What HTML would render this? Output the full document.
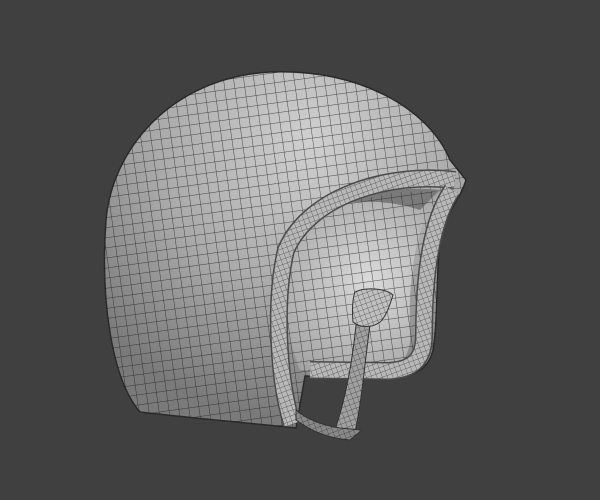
<!DOCTYPE html>
<html><head><style>html,body{margin:0;padding:0;background:#404040;width:600px;height:500px;overflow:hidden}</style></head>
<body>
<svg width="600" height="500" viewBox="0 0 600 500" xmlns="http://www.w3.org/2000/svg">
<defs>
<radialGradient id="sh" cx="310" cy="140" r="280" gradientUnits="userSpaceOnUse">
<stop offset="0" stop-color="#d0d0d0"/><stop offset="0.55" stop-color="#aaaaaa"/><stop offset="1" stop-color="#7a7a7a"/>
</radialGradient>
<radialGradient id="in" cx="370" cy="280" r="130" gradientUnits="userSpaceOnUse">
<stop offset="0" stop-color="#dadada"/><stop offset="1" stop-color="#9a9a9a"/>
</radialGradient>
<pattern id="g" width="10" height="10" patternUnits="userSpaceOnUse" patternTransform="rotate(-8)">
<path d="M0 0H10M0 0V10" stroke="#1e1e1e" stroke-width="1" fill="none" opacity="0.75"/>
</pattern>
<pattern id="g2" width="5" height="5" patternUnits="userSpaceOnUse" patternTransform="rotate(-20)">
<path d="M0 0H5M0 0V5" stroke="#222" stroke-width="0.7" fill="none" opacity="0.75"/>
</pattern>
</defs>
<path d="M140 412 C112 380,100 300,106 220 C112 150,170 78,270 72 C360 68,430 110,450 160 L466 180 C460 200,445 215,440 235 C436 280,438 320,433 350 C428 372,410 378,385 378 L305 376 L296 428 C260 424,190 418,140 412 Z" fill="url(#sh)" stroke="#2a2a2a" stroke-width="1.5"/>
<path d="M140 412 C112 380,100 300,106 220 C112 150,170 78,270 72 C360 68,430 110,450 160 L466 180 C460 200,445 215,440 235 C436 280,438 320,433 350 C428 372,410 378,385 378 L305 376 L296 428 C260 424,190 418,140 412 Z" fill="url(#g)"/>
<path d="M288 250 C310 205,380 188,440 192 C415 225,408 280,410 330 C412 356,400 368,385 370 L300 370 C284 330,280 285,288 250 Z" fill="url(#in)"/>
<path d="M330 205 C360 192,400 186,440 190 C430 200,425 205,420 210 C390 200,360 200,330 205 Z" fill="#7a7a7a"/>
<path d="M288 250 C310 205,380 188,440 192 C415 225,408 280,410 330 C412 356,400 368,385 370 L300 370 C284 330,280 285,288 250 Z" fill="url(#g)"/>
<path d="M455 180 C390 172,310 195,286 250 C274 300,278 380,292 424" stroke="#4a4a4a" stroke-width="18" fill="none"/>
<path d="M455 180 C390 172,310 195,286 250 C274 300,278 380,292 424" stroke="#b8b8b8" stroke-width="15" fill="none"/>
<path d="M455 180 C390 172,310 195,286 250 C274 300,278 380,292 424" stroke="url(#g2)" stroke-width="15" fill="none"/>
<path d="M452 190 C432 220,424 270,424 335 C424 362,410 370,388 371 L310 370" stroke="#4a4a4a" stroke-width="18" fill="none"/>
<path d="M452 190 C432 220,424 270,424 335 C424 362,410 370,388 371 L310 370" stroke="#b8b8b8" stroke-width="15" fill="none"/>
<path d="M452 190 C432 220,424 270,424 335 C424 362,410 370,388 371 L310 370" stroke="url(#g2)" stroke-width="15" fill="none"/>
<path d="M356 325 C352 365,345 400,335 430 L355 432 C362 400,365 360,370 325 Z" fill="#a0a0a0" stroke="#333" stroke-width="1"/>
<path d="M356 325 C352 365,345 400,335 430 L355 432 C362 400,365 360,370 325 Z" fill="url(#g2)"/>
<path d="M296 420 C310 430,325 438,350 440 L362 430 L340 428 C320 425,305 418,296 410 Z" fill="#888" stroke="#333" stroke-width="1"/>
<path d="M296 420 C310 430,325 438,350 440 L362 430 L340 428 C320 425,305 418,296 410 Z" fill="url(#g2)"/>
<path d="M355 292 C365 287,385 288,393 295 C390 305,385 318,380 322 C372 328,360 328,353 322 C352 310,352 300,355 292 Z" fill="#c0c0c0" stroke="#333" stroke-width="1"/>
<path d="M355 292 C365 287,385 288,393 295 C390 305,385 318,380 322 C372 328,360 328,353 322 C352 310,352 300,355 292 Z" fill="url(#g2)"/>
</svg>
</body></html>
